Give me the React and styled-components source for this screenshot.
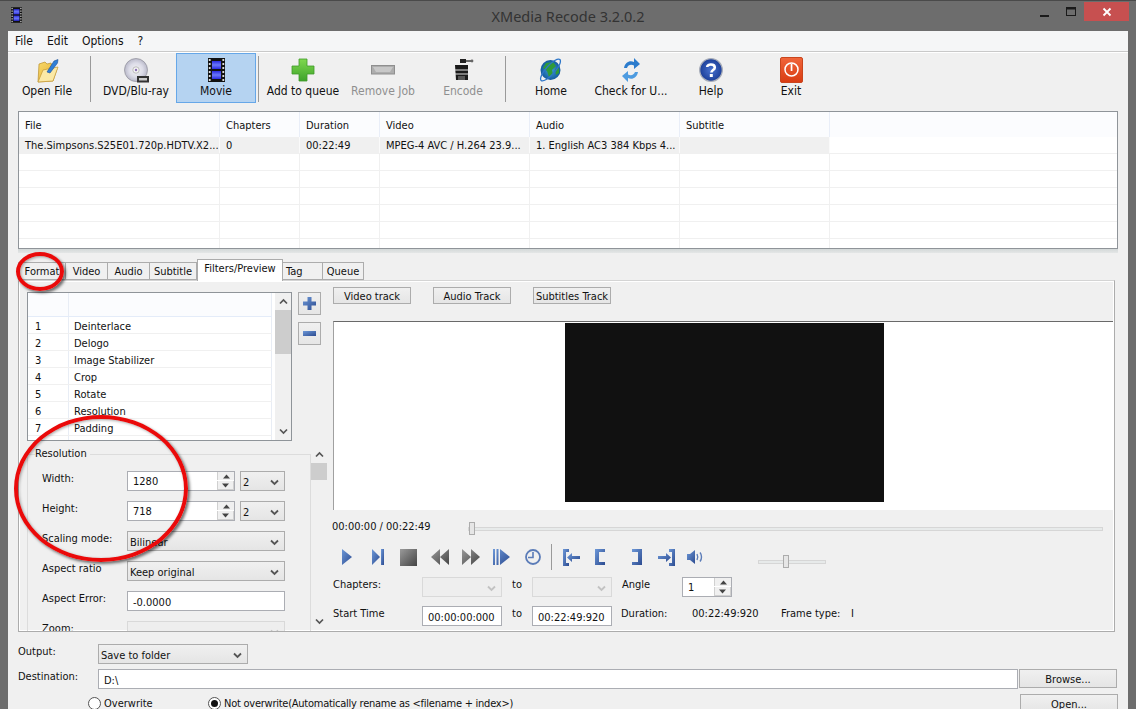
import React from "react";
import styled, { createGlobalStyle } from "styled-components";

const Global = createGlobalStyle`
	html, body { margin: 0; padding: 0; background: #6d6d6d; }
	* { box-sizing: border-box; }
`;

const Page = styled.div`
	position: relative;
	width: 1136px;
	height: 709px;
	overflow: hidden;
	background: #6d6d6d;
	border-top: 1px solid #4a4a4a;
	font-family: "DejaVu Sans Condensed", "DejaVu Sans", Tahoma, sans-serif;
	font-stretch: condensed;
	font-size: 11px;
	color: #111;
`;

const TitleBar = styled.div`
	position: relative;
	display: flex;
	align-items: center;
	justify-content: center;
	height: 30px;
	font-family: "Noto Sans", sans-serif;
	font-stretch: normal;
	font-size: 14.5px;
	color: #333;
`;

const TitleIcon = styled.div`
	position: absolute;
	left: 11px;
	top: 6px;
`;

const WinButtons = styled.div`
	position: absolute;
	top: 1px;
	right: 7px;
	display: flex;
	align-items: flex-start;
`;

const WinButton = styled.div`
	width: ${(p) => p.$w}px;
	height: 19px;
	display: flex;
	align-items: center;
	justify-content: center;
	background: ${(p) => (p.$close ? "#c75050" : "transparent")};
	color: #fff;
`;

const Client = styled.div`
	height: 678px;
	margin: 0 8px;
	background: #f0f0f0;
	overflow: hidden;
`;

const MenuBar = styled.div`
	display: flex;
	height: 21px;
	padding-left: 7px;
	gap: 14px;
	align-items: center;
	background: #f5f6f7;
	border-bottom: 1px solid #c9c9c9;
	font-size: 12px;
`;

const ToolBar = styled.div`
	display: flex;
	align-items: flex-start;
	height: 59px;
	padding-left: 1px;
	border-top: 1px solid #fff;
`;

const ToolItem = styled.div`
	width: 80px;
	height: 50px;
	margin-left: ${(p) => p.$ml || 0}px;
	display: flex;
	flex-direction: column;
	align-items: center;
	justify-content: flex-start;
	padding-top: 3px;
	border: 1px solid ${(p) => (p.$active ? "#66a7e8" : "transparent")};
	background: ${(p) => (p.$active ? "#b5d3f1" : "transparent")};
	color: ${(p) => (p.$off ? "#8f8f8f" : "#111")};
	font-size: 12px;
	white-space: nowrap;
`;

const IconBox = styled.div`
	height: 26px;
	margin-bottom: 1px;
	display: flex;
	align-items: center;
	justify-content: center;
`;

const ToolSep = styled.div`
	width: 1px;
	height: 46px;
	margin: 3px ${(p) => p.$mr || 4}px 0 ${(p) => p.$ml || 2}px;
	background: #9a9a9a;
`;

const FileTable = styled.div`
	height: 138px;
	width: 1100px;
	margin-left: 10px;
	background: #fff;
	border: 1px solid #8f9499;
	overflow: hidden;
`;

const HeaderRow = styled.div`
	display: flex;
	height: 25px;
	background: #fbfcfe;
`;

const HeaderCell = styled.div`
	width: ${(p) => p.$w}px;
	flex: none;
	display: flex;
	align-items: center;
	padding: 1px 0 0 6px;
	border-right: 1px solid #e9eef8;
`;

const DataRow = styled.div`
	display: flex;
	height: 17px;
	border-bottom: 1px solid #f0f0f0;
`;

const DataCell = styled.div`
	width: ${(p) => p.$w}px;
	flex: none;
	display: flex;
	align-items: center;
	padding-left: 6px;
	white-space: nowrap;
	overflow: hidden;
	background: ${(p) => (p.$sel ? "#f0f0f0" : "#fff")};
	border-right: 1px solid ${(p) => (p.$sel ? "#fafafa" : "#f0f0f0")};
`;

const Splitter = styled.div`
	height: 4px;
	width: 1100px;
	margin-left: 10px;
	background: linear-gradient(#d3d8d8, #e4e6e6);
`;

const TabStrip = styled.div`
	display: flex;
	align-items: flex-end;
	height: 21px;
	margin: 6px 0 0 10px;
`;

const Tab = styled.div`
	width: ${(p) => p.$w}px;
	height: ${(p) => (p.$active ? 22 : 18)}px;
	margin-bottom: ${(p) => (p.$active ? -1 : 0)}px;
	display: flex;
	align-items: center;
	justify-content: ${(p) => (p.$start ? "flex-start" : "center")};
	padding-left: ${(p) => (p.$start ? 3 : 0)}px;
	padding-bottom: ${(p) => (p.$active ? 4 : 0)}px;
	background: ${(p) => (p.$active ? "#fff" : "#f0f0f0")};
	border: 1px solid #acacac;
	border-bottom: ${(p) => (p.$active ? "none" : "1px solid #acacac")};
	border-left: ${(p) => (p.$first || p.$active ? "1px solid #acacac" : "none")};
	position: relative;
`;

const Pane = styled.div`
	display: flex;
	width: 1097px;
	height: 352px;
	margin-left: 10px;
	padding: 11px 0 0 8px;
	border: 1px solid #acacac;
	border-top-color: #d4d4d4;
	box-shadow: inset 0 0 0 1px #fff;
	background: #f0f0f0;
`;

const LeftColumn = styled.div`
	width: 306px;
	flex: none;
`;

const FilterRow = styled.div`
	display: flex;
	align-items: flex-start;
	gap: 6px;
`;

const FilterList = styled.div`
	display: flex;
	width: 265px;
	height: 149px;
	background: #fff;
	border: 1px solid #8f9499;
	overflow: hidden;
`;

const FilterBody = styled.div`
	width: 244px;
	flex: none;
`;

const FilterHead = styled.div`
	display: flex;
	height: 24px;
	background: #fbfcfe;
	border-bottom: 1px solid #e4ecf9;
`;

const FilterItem = styled.div`
	display: flex;
	height: 17px;
	border-bottom: 1px solid #f0f0f0;
`;

const NumCell = styled.div`
	width: 41px;
	flex: none;
	padding: 2px 0 0 7px;
	display: flex;
	align-items: center;
	border-right: 1px solid #e8edf5;
`;

const NameCell = styled.div`
	flex: 1;
	padding: 2px 0 0 5px;
	display: flex;
	align-items: center;
	border-right: 1px solid #e8edf5;
`;

const Scrollbar = styled.div`
	width: ${(p) => p.$w || 16}px;
	flex: none;
	display: flex;
	flex-direction: column;
	align-items: stretch;
	height: ${(p) => p.$h}px;
	background: #f0f0f0;
	margin-left: ${(p) => p.$ml || 0}px;
`;

const ScrollArrow = styled.div`
	height: 17px;
	flex: none;
	display: flex;
	align-items: center;
	justify-content: center;
	margin-top: ${(p) => (p.$end ? "auto" : 0)};
`;

const ScrollThumb = styled.div`
	height: ${(p) => p.$h}px;
	background: #cdcdcd;
`;

const SideButtons = styled.div`
	display: flex;
	flex-direction: column;
	gap: 7px;
`;

const SideButton = styled.div`
	width: 23px;
	height: 23px;
	display: flex;
	align-items: center;
	justify-content: center;
	background: linear-gradient(#f0f0f0, #e6e6e6);
	border: 1px solid #acacac;
`;

const SettingsArea = styled.div`
	display: flex;
	height: 185px;
	margin-top: 5px;
	overflow: hidden;
`;

const GroupBox = styled.fieldset`
	width: 284px;
	flex: none;
	height: 240px;
	margin: 1px 0 0;
	padding: 10px 0 0 14px;
	border: 1px solid #dcdcdc;
	min-inline-size: 0;
`;

const GroupTitle = styled.legend`
	margin-left: -7px;
	padding: 0 3px 0 0;
	line-height: 14px;
`;

const FormRow = styled.div`
	display: grid;
	grid-template-columns: 85px 158px;
	height: 20px;
	margin-bottom: 10px;
`;

const FormLabel = styled.div`
	padding-top: 1px;
	line-height: 14px;
`;

const FieldPair = styled.div`
	display: flex;
	gap: 5px;
`;

const Combo = styled.div`
	width: ${(p) => (p.$w ? `${p.$w}px` : "100%")};
	height: 20px;
	flex: none;
	display: flex;
	align-items: center;
	justify-content: space-between;
	padding: 2px 5px 0 2px;
	background: ${(p) => (p.$off ? "#eeeeee" : "linear-gradient(#f0f0f0, #e5e5e5)")};
	border: 1px solid ${(p) => (p.$off ? "#d9d9d9" : "#acacac")};
`;

const TextBox = styled.div`
	width: ${(p) => (p.$w ? `${p.$w}px` : "100%")};
	height: 20px;
	flex: none;
	padding: 2px 0 0 5px;
	display: flex;
	align-items: center;
	background: #fff;
	border: 1px solid #abadb3;
	white-space: nowrap;
`;

const SpinBox = styled.div`
	width: ${(p) => p.$w}px;
	height: 20px;
	flex: none;
	display: flex;
	justify-content: space-between;
	padding-left: 5px;
	align-items: center;
	background: #fff;
	border: 1px solid #abadb3;
`;

const SpinButtons = styled.div`
	width: 17px;
	height: 18px;
	display: flex;
	flex-direction: column;
	gap: 1px;
`;

const SpinButton = styled.div`
	flex: 1;
	display: flex;
	align-items: center;
	justify-content: center;
	background: #f0f0f0;
	border: 1px solid #d0d0d0;
	border-width: ${(p) => (p.$down ? "0 1px 1px 1px" : "0 0 0 1px")};
`;

const RightColumn = styled.div`
	flex: 1;
	min-width: 0;
`;

const TrackBar = styled.div`
	display: flex;
	gap: 22px;
	height: 17px;
	margin-top: -5px;
`;

const TrackButton = styled.div`
	width: 78px;
	height: 17px;
	display: flex;
	align-items: center;
	justify-content: center;
	padding-top: 1px;
	background: linear-gradient(#f0f0f0, #e5e5e5);
	border: 1px solid #acacac;
	white-space: nowrap;
`;

const Preview = styled.div`
	display: flex;
	justify-content: center;
	width: 780px;
	height: 189px;
	margin-top: 17px;
	padding-top: 1px;
	background: #fff;
	border-top: 1px solid #696969;
	border-left: 1px solid #a0a0a0;
`;

const Frame = styled.div`
	width: 319px;
	height: 179px;
	margin-left: 2px;
	background: #111;
`;

const SeekRow = styled.div`
	display: flex;
	align-items: center;
	height: 14px;
	margin-top: 9px;
	margin-left: -1px;
`;

const TimeLabel = styled.div`
	width: 136px;
	flex: none;
`;

const SliderTrack = styled.div`
	position: relative;
	width: ${(p) => p.$w}px;
	height: 4px;
	flex: none;
	margin-left: ${(p) => p.$ml || 0}px;
	margin-top: ${(p) => p.$mt || 0}px;
	background: #e7eaea;
	border: 1px solid #d6d6d6;
`;

const SliderThumb = styled.div`
	position: absolute;
	left: ${(p) => p.$left}px;
	top: -6px;
	width: 6px;
	height: 13px;
	background: #e6e6e6;
	border: 1px solid #acacac;
`;

const Transport = styled.div`
	display: flex;
	align-items: center;
	height: 28px;
	margin: 10px 0 0 -2px;
`;

const TransportSlot = styled.div`
	width: ${(p) => p.$w || 31}px;
	margin-left: ${(p) => p.$ml || 0}px;
	flex: none;
	display: flex;
	justify-content: center;
`;

const TransportSep = styled.div`
	width: 1px;
	height: 26px;
	margin-left: 3px;
	background: #9a9a9a;
`;

const ControlRow = styled.div`
	display: flex;
	height: 20px;
	margin-top: ${(p) => p.$mt}px;
`;

const ControlLabel = styled.div`
	width: ${(p) => p.$w}px;
	flex: none;
	padding-left: ${(p) => p.$pl || 0}px;
	padding-top: 1px;
	line-height: 14px;
	white-space: nowrap;
`;

const BottomRow = styled.div`
	display: flex;
	margin-left: 10px;
	height: 20px;
	margin-top: ${(p) => p.$mt}px;
`;

const BottomLabel = styled.div`
	width: 80px;
	flex: none;
	padding-top: 1px;
	line-height: 14px;
`;

const BrowseButton = styled.div`
	width: 98px;
	height: 19px;
	margin-left: 1px;
	flex: none;
	display: flex;
	align-items: center;
	justify-content: center;
	padding-top: 1px;
	background: linear-gradient(#f0f0f0, #e5e5e5);
	border: 1px solid #acacac;
`;

const RadioLine = styled.div`
	display: flex;
	align-items: center;
	height: 18px;
	width: 1001px;
	padding-left: 70px;
`;

const RadioMark = styled.div`
	width: 13px;
	height: 13px;
	flex: none;
	border-radius: 50%;
	border: 1px solid #555;
	background: #fff;
	display: flex;
	align-items: center;
	justify-content: center;
	margin-right: 3px;
	&::after {
		content: "";
		display: ${(p) => (p.$on ? "block" : "none")};
		width: 7px;
		height: 7px;
		border-radius: 50%;
		background: #111;
	}
`;

const RadioLabel = styled.div`
	width: ${(p) => (p.$w ? `${p.$w}px` : "auto")};
	letter-spacing: ${(p) => (p.$tight ? "-0.25px" : "normal")};
	white-space: nowrap;
`;

const RedRing = styled.div`
	position: absolute;
	left: ${(p) => p.$x}px;
	top: ${(p) => p.$y}px;
	width: ${(p) => p.$w}px;
	height: ${(p) => p.$h}px;
	border: 4px solid #ea0a0a;
	border-radius: 50%;
	box-shadow: 2px 2px 3px rgba(0, 0, 0, 0.55), inset 1px 1px 3px rgba(0, 0, 0, 0.35);
	pointer-events: none;
`;

const DefsHolder = styled.svg`
	position: absolute;
	width: 0;
	height: 0;
`;

const Chevron = ({ off }) => (
	<svg width="9" height="7" viewBox="0 0 9 7">
		<path d="M1 1.5 L4.5 5 L8 1.5" fill="none" stroke={off ? "#c2c2c2" : "#555"} strokeWidth="1.8" />
	</svg>
);

const Caret = ({ up, color = "#444", size = 5 }) => (
	<svg width={size + 2} height={size} viewBox="0 0 7 5">
		<path d={up ? "M3.5 0.5 L7 4.5 L0 4.5 Z" : "M3.5 4.5 L7 0.5 L0 0.5 Z"} fill={color} />
	</svg>
);

const ArrowGlyph = ({ up }) => (
	<svg width="9" height="7" viewBox="0 0 9 7">
		<path d={up ? "M1 5.5 L4.5 2 L8 5.5" : "M1 1.5 L4.5 5 L8 1.5"} fill="none" stroke="#555" strokeWidth="1.7" />
	</svg>
);

const Film = ({ w = 17, h = 24 }) => (
	<svg width={w} height={h} viewBox="0 0 17 24">
		<rect x="0" y="0" width="17" height="24" fill="#111" />
		{[1, 5, 9, 13, 17, 21].map((y) => (
			<g key={y}>
				<rect x="0.8" y={y} width="1.8" height="2" fill="#ddd" />
				<rect x="14.4" y={y} width="1.8" height="2" fill="#ddd" />
			</g>
		))}
		<rect x="4" y="3" width="9" height="8" fill="url(#filmBlue)" />
		<rect x="4" y="13" width="9" height="8" fill="url(#filmBlue)" />
	</svg>
);

const FolderIcon = () => (
	<svg width="25" height="25" viewBox="0 0 25 25">
		<path d="M4 6 L10 4 L12 6 L16 5 L19 12 L22 11 L18 23 L3 24 Z" fill="url(#folderGold)" stroke="#b98f2c" strokeWidth="0.7" />
		<path d="M8 12 L23 9 L18 23 L3 24 Z" fill="#fbe9a6" stroke="#c49a35" strokeWidth="0.7" />
		<path d="M12 14 L19 3 L23 1.5 L22.5 5 L15 15 Z" fill="#2f7fd6" stroke="#1c4f95" strokeWidth="0.6" />
	</svg>
);

const DiscIcon = () => (
	<svg width="25" height="25" viewBox="0 0 25 25">
		<circle cx="12" cy="12" r="11.5" fill="url(#discGrey)" stroke="#8f8f9a" strokeWidth="0.7" />
		<circle cx="12" cy="12" r="3.2" fill="#f4f4f4" stroke="#999" strokeWidth="0.6" />
		<circle cx="12" cy="12" r="1.2" fill="#8a6fb5" />
		<rect x="13" y="18" width="12" height="6.5" fill="#333" />
		<rect x="15" y="20" width="8" height="2.5" fill="#ccc" />
	</svg>
);

const PlusIcon = () => (
	<svg width="24" height="24" viewBox="0 0 24 24">
		<path d="M8 1 H16 V8 H23 V16 H16 V23 H8 V16 H1 V8 H8 Z" fill="url(#plusGreen)" stroke="#3f9a2a" strokeWidth="0.8" />
	</svg>
);

const MinusIcon = () => (
	<svg width="24" height="10" viewBox="0 0 24 10">
		<rect x="0.5" y="0.5" width="23" height="8.5" fill="#adadad" stroke="#8f8f8f" />
		<path d="M2 2 H22 L19 7 H5 Z" fill="#c8c8c8" />
	</svg>
);

const EncodeIcon = () => (
	<svg width="22" height="24" viewBox="0 0 22 24">
		<path d="M3 7 H16 V22 H4 Z" fill="#1a1a1a" />
		<path d="M8 1 H14 V5 H8 Z" fill="#222" />
		<path d="M14 3 H21" stroke="#333" strokeWidth="1.4" />
		<circle cx="20" cy="3" r="1.4" fill="#666" />
		<path d="M3 12 H16 M3 16 H16" stroke="#ddd" strokeWidth="1.2" />
		<rect x="6" y="18" width="7" height="4" fill="#555" />
	</svg>
);

const GlobeIcon = () => (
	<svg width="24" height="26" viewBox="0 0 24 26">
		<circle cx="11.5" cy="13" r="10" fill="url(#globeBlue)" />
		<path d="M7 6 L14 5 L17 9 L13 13 L14 18 L10 20 L8 14 L4 11 Z" fill="#2f9a3a" />
		<path d="M16 12 L20 11 L20 16 L17 18 Z" fill="#2f9a3a" />
		<ellipse cx="11.5" cy="13" rx="14" ry="4.4" transform="rotate(-48 11.5 13)" fill="none" stroke="#2d76c9" strokeWidth="1.3" />
	</svg>
);

const RefreshIcon = () => (
	<svg width="18" height="26" viewBox="0 0 18 26">
		<path d="M2 11 C3 5 8 3 12 5 L12 1 L18 7 L12 12 L12 8.5 C9 7 6 8 5 11 Z" fill="#2c7ccd" />
		<path d="M16 15 C15 21 10 23 6 21 L6 25 L0 19 L6 14 L6 17.5 C9 19 12 18 13 15 Z" fill="#4d9be0" />
	</svg>
);

const HelpIcon = () => (
	<svg width="24" height="26" viewBox="0 0 24 26">
		<circle cx="12" cy="13" r="11.3" fill="url(#helpBlue)" stroke="#a8adb8" strokeWidth="1.3" />
		<path d="M8.2 10 C8.2 6.6 15.8 6.6 15.8 10.4 C15.8 13 12.6 13 12.4 15.5" fill="none" stroke="#fff" strokeWidth="2.6" />
		<rect x="10.8" y="17" width="3" height="3" fill="#fff" />
	</svg>
);

const ExitIcon = () => (
	<svg width="23" height="26" viewBox="0 0 23 26">
		<rect x="0.5" y="0.5" width="22" height="25" rx="1.5" fill="url(#exitRed)" stroke="#c9451d" />
		<circle cx="11.5" cy="12.5" r="6.5" fill="none" stroke="#fff" strokeWidth="1.5" />
		<rect x="10.7" y="7" width="1.7" height="7" fill="#fff" />
	</svg>
);

const Play = () => (
	<svg width="10" height="16" viewBox="0 0 10 16"><path d="M0 0 L10 8 L0 16 Z" fill="url(#ctlBlue)" /></svg>
);
const StepOn = () => (
	<svg width="12" height="16" viewBox="0 0 12 16"><path d="M0 0 L8 8 L0 16 Z" fill="url(#ctlBlue)" /><rect x="9" y="0" width="3" height="16" fill="url(#ctlBlue)" /></svg>
);
const Stop = () => (
	<svg width="17" height="17" viewBox="0 0 17 17"><rect width="17" height="17" fill="url(#ctlGrey)" /></svg>
);
const Rewind = () => (
	<svg width="18" height="16" viewBox="0 0 18 16"><path d="M9 0 L0 8 L9 16 Z M18 0 L9 8 L18 16 Z" fill="url(#ctlGrey)" /></svg>
);
const Forward = () => (
	<svg width="18" height="16" viewBox="0 0 18 16"><path d="M0 0 L9 8 L0 16 Z M9 0 L18 8 L9 16 Z" fill="url(#ctlGrey)" /></svg>
);
const Slow = () => (
	<svg width="17" height="16" viewBox="0 0 17 16"><path d="M0 0 H2 V16 H0 Z M3.5 0 H5.5 V16 H3.5 Z M7 0 L17 8 L7 16 Z" fill="url(#ctlBlue)" /></svg>
);
const Clock = () => (
	<svg width="16" height="16" viewBox="0 0 16 16"><circle cx="8" cy="8" r="7" fill="none" stroke="#5b7cb8" strokeWidth="1.8" /><path d="M8 3 V8.5 H3" fill="none" stroke="#5b7cb8" strokeWidth="1.6" /></svg>
);
const MarkIn = () => (
	<svg width="17" height="17" viewBox="0 0 17 17"><path d="M0 0 H6 V3 H3 V14 H6 V17 H0 Z" fill="url(#ctlBlue)" /><path d="M4 8.5 L9 4 V7 H17 V10 H9 V13 Z" fill="url(#ctlBlue)" /></svg>
);
const BracketOpen = () => (
	<svg width="10" height="16" viewBox="0 0 10 16"><path d="M0 0 H10 V3 H4 V13 H10 V16 H0 Z" fill="url(#ctlBlue)" /></svg>
);
const BracketClose = () => (
	<svg width="10" height="16" viewBox="0 0 10 16"><path d="M10 0 H0 V3 H6 V13 H0 V16 H10 Z" fill="url(#ctlBlue)" /></svg>
);
const MarkOut = () => (
	<svg width="17" height="17" viewBox="0 0 17 17"><path d="M17 0 H11 V3 H14 V14 H11 V17 H17 Z" fill="url(#ctlBlue)" /><path d="M13 8.5 L8 4 V7 H0 V10 H8 V13 Z" fill="url(#ctlBlue)" /></svg>
);
const Volume = () => (
	<svg width="16" height="14" viewBox="0 0 16 14"><path d="M0 4 H3 L8 0 V14 L3 10 H0 Z" fill="url(#ctlBlue)" /><path d="M10 4 C11 6 11 8 10 10 M13 2.5 C15 5 15 9 13 11.5" fill="none" stroke="#5b7cb8" strokeWidth="1.4" /></svg>
);

const fileColumns = [
	{ w: 201, head: "File", cell: "The.Simpsons.S25E01.720p.HDTV.X2..." },
	{ w: 80, head: "Chapters", cell: "0" },
	{ w: 80, head: "Duration", cell: "00:22:49" },
	{ w: 150, head: "Video", cell: "MPEG-4 AVC / H.264 23.9..." },
	{ w: 150, head: "Audio", cell: "1. English AC3 384 Kbps 4..." },
	{ w: 150, head: "Subtitle", cell: "" },
];

const filters = ["Deinterlace", "Delogo", "Image Stabilizer", "Crop", "Rotate", "Resolution", "Padding", ""];

const Spin = ({ w, value }) => (
	<SpinBox $w={w}>
		{value}
		<SpinButtons>
			<SpinButton><Caret up /></SpinButton>
			<SpinButton $down><Caret /></SpinButton>
		</SpinButtons>
	</SpinBox>
);

const Gradients = () => (
	<DefsHolder>
		<defs>
			<linearGradient id="filmBlue" x1="0" y1="0" x2="0" y2="1"><stop offset="0" stopColor="#2a2ae0" /><stop offset="0.5" stopColor="#6b78f5" /><stop offset="1" stopColor="#2a2ae0" /></linearGradient>
			<linearGradient id="folderGold" x1="0" y1="0" x2="1" y2="1"><stop offset="0" stopColor="#f8d96a" /><stop offset="1" stopColor="#e0a92f" /></linearGradient>
			<radialGradient id="discGrey"><stop offset="0" stopColor="#f4f4f4" /><stop offset="0.6" stopColor="#dcdce8" /><stop offset="1" stopColor="#b9b9c9" /></radialGradient>
			<linearGradient id="plusGreen" x1="0" y1="0" x2="0" y2="1"><stop offset="0" stopColor="#7fd84e" /><stop offset="1" stopColor="#3ea32b" /></linearGradient>
			<radialGradient id="globeBlue"><stop offset="0" stopColor="#3fa0d8" /><stop offset="1" stopColor="#135a9e" /></radialGradient>
			<radialGradient id="helpBlue"><stop offset="0" stopColor="#4a73d0" /><stop offset="1" stopColor="#1c3f98" /></radialGradient>
			<linearGradient id="exitRed" x1="0" y1="0" x2="0" y2="1"><stop offset="0" stopColor="#f0653a" /><stop offset="1" stopColor="#d93c12" /></linearGradient>
			<linearGradient id="ctlBlue" x1="0" y1="0" x2="1" y2="1"><stop offset="0" stopColor="#6d98d8" /><stop offset="1" stopColor="#2c4b90" /></linearGradient>
			<linearGradient id="ctlGrey" x1="0" y1="0" x2="1" y2="1"><stop offset="0" stopColor="#9a9a9a" /><stop offset="1" stopColor="#444" /></linearGradient>
		</defs>
	</DefsHolder>
);

export default function App() {
	return (
		<Page>
			<Global />
			<Gradients />
			<TitleBar>
				<TitleIcon><Film w={11} h={16} /></TitleIcon>
				XMedia Recode 3.2.0.2
				<WinButtons>
					<WinButton $w={27}>
						<svg width="10" height="12" viewBox="0 0 10 12"><rect y="9" width="9" height="2" fill="#1a1a1a" /></svg>
					</WinButton>
					<WinButton $w={26}>
						<svg width="11" height="10" viewBox="0 0 11 10"><rect x="0.5" y="0.5" width="9" height="8" fill="none" stroke="#1a1a1a" /><rect x="0.5" y="0.5" width="9" height="2" fill="#1a1a1a" /></svg>
					</WinButton>
					<WinButton $w={45} $close>
						<svg width="10" height="10" viewBox="0 0 10 10"><path d="M1.5 1.5 L8.5 8.5 M8.5 1.5 L1.5 8.5" stroke="#fff" strokeWidth="1.8" /></svg>
					</WinButton>
				</WinButtons>
			</TitleBar>
			<Client>
				<MenuBar>
					<span>File</span>
					<span>Edit</span>
					<span>Options</span>
					<span>?</span>
				</MenuBar>
				<ToolBar>
					<ToolItem $ml={-2}><IconBox><FolderIcon /></IconBox>Open File</ToolItem>
					<ToolSep $ml={3} $mr={5} />
					<ToolItem><IconBox><DiscIcon /></IconBox>DVD/Blu-ray</ToolItem>
					<ToolItem $active><IconBox><Film /></IconBox>Movie</ToolItem>
					<ToolSep />
					<ToolItem><IconBox><PlusIcon /></IconBox>Add to queue</ToolItem>
					<ToolItem $off><IconBox><MinusIcon /></IconBox>Remove Job</ToolItem>
					<ToolItem $off><IconBox><EncodeIcon /></IconBox>Encode</ToolItem>
					<ToolSep $mr={5} />
					<ToolItem><IconBox><GlobeIcon /></IconBox>Home</ToolItem>
					<ToolItem><IconBox><RefreshIcon /></IconBox>Check for U...</ToolItem>
					<ToolItem><IconBox><HelpIcon /></IconBox>Help</ToolItem>
					<ToolItem><IconBox><ExitIcon /></IconBox>Exit</ToolItem>
				</ToolBar>
				<FileTable>
					<HeaderRow>
						{fileColumns.map((c) => (
							<HeaderCell key={c.head} $w={c.w}>{c.head}</HeaderCell>
						))}
					</HeaderRow>
					<DataRow>
						{fileColumns.map((c) => (
							<DataCell key={c.head} $w={c.w} $sel>{c.cell}</DataCell>
						))}
					</DataRow>
					{[1, 2, 3, 4, 5, 6].map((r) => (
						<DataRow key={r}>
							{fileColumns.map((c) => (
								<DataCell key={c.head} $w={c.w} />
							))}
						</DataRow>
					))}
				</FileTable>
				<Splitter />
				<TabStrip>
					<Tab $w={48} $first>Format</Tab>
					<Tab $w={42}>Video</Tab>
					<Tab $w={42}>Audio</Tab>
					<Tab $w={47}>Subtitle</Tab>
					<Tab $w={86} $active>Filters/Preview</Tab>
					<Tab $w={40} $start>Tag</Tab>
					<Tab $w={41}>Queue</Tab>
				</TabStrip>
				<Pane>
					<LeftColumn>
						<FilterRow>
							<FilterList>
								<FilterBody>
									<FilterHead>
										<NumCell />
										<NameCell />
									</FilterHead>
									{filters.map((name, i) => (
										<FilterItem key={i}>
											<NumCell>{name && i + 1}</NumCell>
											<NameCell>{name}</NameCell>
										</FilterItem>
									))}
								</FilterBody>
								<Scrollbar $h={147} $ml={3}>
									<ScrollArrow><ArrowGlyph up /></ScrollArrow>
									<ScrollThumb $h={44} />
									<ScrollArrow $end><ArrowGlyph /></ScrollArrow>
								</Scrollbar>
							</FilterList>
							<SideButtons>
								<SideButton>
									<svg width="13" height="13" viewBox="0 0 13 13"><path d="M4.5 0 H8.5 V4.5 H13 V8.5 H8.5 V13 H4.5 V8.5 H0 V4.5 H4.5 Z" fill="url(#ctlBlue)" /></svg>
								</SideButton>
								<SideButton>
									<svg width="13" height="5" viewBox="0 0 13 5"><rect width="13" height="5" fill="url(#ctlBlue)" /></svg>
								</SideButton>
							</SideButtons>
						</FilterRow>
						<SettingsArea>
							<GroupBox>
								<GroupTitle>Resolution</GroupTitle>
								<FormRow>
									<FormLabel>Width:</FormLabel>
									<FieldPair><Spin w={108} value="1280" /><Combo $w={45}>2<Chevron /></Combo></FieldPair>
								</FormRow>
								<FormRow>
									<FormLabel>Height:</FormLabel>
									<FieldPair><Spin w={108} value="718" /><Combo $w={45}>2<Chevron /></Combo></FieldPair>
								</FormRow>
								<FormRow>
									<FormLabel>Scaling mode:</FormLabel>
									<Combo>Bilinear<Chevron /></Combo>
								</FormRow>
								<FormRow>
									<FormLabel>Aspect ratio</FormLabel>
									<Combo>Keep original<Chevron /></Combo>
								</FormRow>
								<FormRow>
									<FormLabel>Aspect Error:</FormLabel>
									<TextBox>-0.0000</TextBox>
								</FormRow>
								<FormRow>
									<FormLabel>Zoom:</FormLabel>
									<Combo $off><span /><Chevron off /></Combo>
								</FormRow>
							</GroupBox>
							<Scrollbar $h={184}>
								<ScrollArrow><ArrowGlyph up /></ScrollArrow>
								<ScrollThumb $h={17} />
								<ScrollArrow $end><ArrowGlyph /></ScrollArrow>
							</Scrollbar>
						</SettingsArea>
					</LeftColumn>
					<RightColumn>
						<TrackBar>
							<TrackButton>Video track</TrackButton>
							<TrackButton>Audio Track</TrackButton>
							<TrackButton>Subtitles Track</TrackButton>
						</TrackBar>
						<Preview><Frame /></Preview>
						<SeekRow>
							<TimeLabel>00:00:00 / 00:22:49</TimeLabel>
							<SliderTrack $w={635} $mt={5}><SliderThumb $left={0} /></SliderTrack>
						</SeekRow>
						<Transport>
							<TransportSlot><Play /></TransportSlot>
							<TransportSlot><StepOn /></TransportSlot>
							<TransportSlot><Stop /></TransportSlot>
							<TransportSlot><Rewind /></TransportSlot>
							<TransportSlot><Forward /></TransportSlot>
							<TransportSlot><Slow /></TransportSlot>
							<TransportSlot><Clock /></TransportSlot>
							<TransportSep />
							<TransportSlot $w={20} $ml={9}><MarkIn /></TransportSlot>
							<TransportSlot $w={20} $ml={9}><BracketOpen /></TransportSlot>
							<TransportSlot $w={20} $ml={17}><BracketClose /></TransportSlot>
							<TransportSlot $w={20} $ml={9}><MarkOut /></TransportSlot>
							<TransportSlot $w={20} $ml={9}><Volume /></TransportSlot>
							<SliderTrack $w={68} $ml={53} $mt={10}><SliderThumb $left={24} /></SliderTrack>
						</Transport>
						<ControlRow $mt={6}>
							<ControlLabel $w={89}>Chapters:</ControlLabel>
							<Combo $w={80} $off><span /><Chevron off /></Combo>
							<ControlLabel $w={30} $pl={10}>to</ControlLabel>
							<Combo $w={80} $off><span /><Chevron off /></Combo>
							<ControlLabel $w={70} $pl={10}>Angle</ControlLabel>
							<Spin w={50} value="1" />
						</ControlRow>
						<ControlRow $mt={9}>
							<ControlLabel $w={89}>Start Time</ControlLabel>
							<TextBox $w={80}>00:00:00:000</TextBox>
							<ControlLabel $w={30} $pl={10}>to</ControlLabel>
							<TextBox $w={80}>00:22:49:920</TextBox>
							<ControlLabel $w={80} $pl={9}>Duration:</ControlLabel>
							<ControlLabel $w={89}>00:22:49:920</ControlLabel>
							<ControlLabel $w={70}>Frame type:</ControlLabel>
							<ControlLabel $w={10}>I</ControlLabel>
						</ControlRow>
					</RightColumn>
				</Pane>
				<BottomRow $mt={12}>
					<BottomLabel>Output:</BottomLabel>
					<Combo $w={150}>Save to folder<Chevron /></Combo>
				</BottomRow>
				<BottomRow $mt={5}>
					<BottomLabel>Destination:</BottomLabel>
					<TextBox $w={920}>D:\</TextBox>
					<BrowseButton>Browse...</BrowseButton>
				</BottomRow>
				<BottomRow $mt={5}>
					<RadioLine>
						<RadioMark />
						<RadioLabel $w={104}>Overwrite</RadioLabel>
						<RadioMark $on />
						<RadioLabel $tight>Not overwrite(Automatically rename as &lt;filename + index&gt;)</RadioLabel>
					</RadioLine>
					<BrowseButton>Open...</BrowseButton>
				</BottomRow>
			</Client>
			<RedRing $x={16} $y={251} $w={48} $h={39} />
			<RedRing $x={14} $y={414} $w={174} $h={147} />
		</Page>
	);
}
